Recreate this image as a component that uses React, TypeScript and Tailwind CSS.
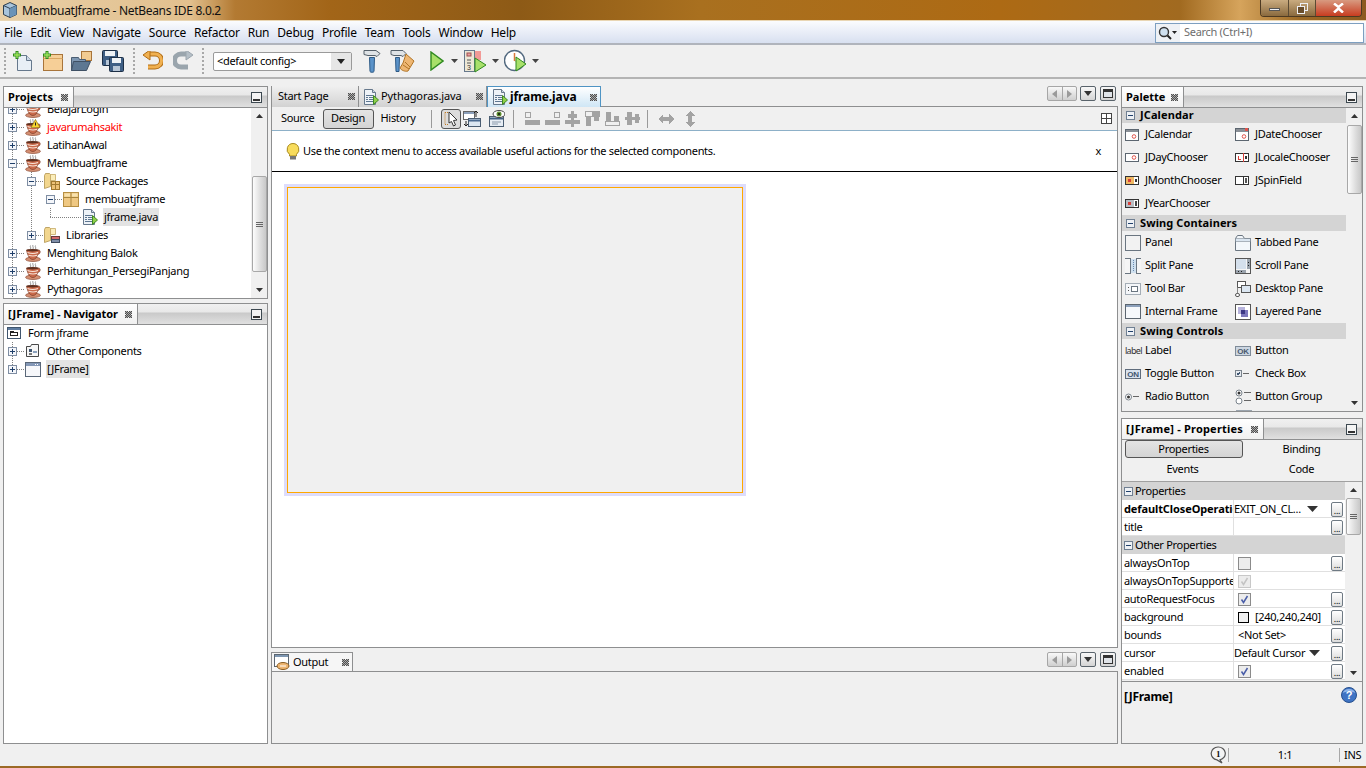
import React from "react";

const FONT = "font-['Noto_Sans',sans-serif]";

/* ---------- small icons ---------- */
const CLOSE_PIXELS: [number, number, string][] = [];
for (let y = 0; y < 7; y++) {
  for (let x = 0; x < 7; x++) {
    const edge = (x === 3 && (y === 0 || y === 6)) || (y === 3 && (x === 0 || x === 6));
    if (edge) continue;
    CLOSE_PIXELS.push([x, y, (x + y) % 2 === 0 ? "#4f4f4f" : "#a8a8a8"]);
  }
}
function Close() {
  return (
    <svg width="7" height="7" viewBox="0 0 7 7" shapeRendering="crispEdges" className="shrink-0">
      {CLOSE_PIXELS.map(([x, y, c]) => (
        <rect key={`${x}-${y}`} x={x} y={y} width="1" height="1" fill={c} />
      ))}
    </svg>
  );
}
function Minimize() {
  return (
    <svg width="11" height="11" viewBox="0 0 11 11" shapeRendering="crispEdges" className="shrink-0">
      <rect x="0.500" y="0.500" width="10" height="10" fill="#f4f4f4" stroke="#3c4850" />
      <rect x="2" y="7" width="7" height="2" fill="#333" />
    </svg>
  );
}
function Cup({ warn }: { warn?: boolean }) {
  return (
    <svg width="16" height="17" viewBox="0 0 16 17" className="shrink-0">
      <path d="M5.500 0.500c-1 1 1 2 0 3.500M8 0c-1 1 1 2.500 0 4M10.500 0.500c-1 1 1 2 0 3.500" stroke="#8c8c8c" fill="none" strokeWidth="0.900" />
      <ellipse cx="8" cy="14.300" rx="7.500" ry="2.200" fill="#d48f72" stroke="#8d4a32" strokeWidth="0.700" />
      <path d="M1.500 5h12c1.200 0 2 1 1.500 2.700-.4 1.200-1.200 1.600-2.200 1.600C12 12 10.500 14.500 8 14.500S3 12.500 1.500 5z" fill="#c9694a" stroke="#7c3c26" strokeWidth="0.700" />
      <path d="M2.500 7.500c3 1.200 7.500 1.200 10.500 0M3.500 10.200c3 1 6 1 8.500 0" stroke="#f8e4d8" strokeWidth="1.100" fill="none" />
      <ellipse cx="7.500" cy="5.200" rx="6" ry="1.300" fill="#5e3020" />
      {warn && <path d="M10.500 0.500l4.500 8h-9z" fill="#f7d530" stroke="#8a6d10" strokeWidth="0.600" />}
      {warn && <rect x="10" y="3.500" width="1" height="3" fill="#222" />}
    </svg>
  );
}
function JavaFile() {
  return (
    <svg width="16" height="16" viewBox="0 0 16 16" className="shrink-0">
      <path d="M1.500 0.500h8l3 3v12h-11z" fill="#eef3f8" stroke="#66788c" />
      <path d="M9.500 0.500v3h3" fill="#cdd9e6" stroke="#66788c" />
      <path d="M3 6.500h7M3 8.500h2M6 8.500h4M3 10.500h2M6 10.500h4M3 12.500h7" stroke="#5d7691" />
      <path d="M10.500 6.500l5 4.500-5 4.500z" fill="#8fd04a" stroke="#3f8a22" />
    </svg>
  );
}
function Folder({ badge }: { badge: "pkg" | "lib" }) {
  return (
    <svg width="16" height="17" viewBox="0 0 16 17" className="shrink-0">
      <path d="M0.500 2.500l1-2h4l1 1v12l-6 2z" fill="#f2d68e" stroke="#b0934f" strokeWidth="0.800" />
      <path d="M6.500 1.500h5v6h-5z" fill="#fbeebb" stroke="#c5a864" strokeWidth="0.800" />
      {badge === "pkg" ? (
        <>
          <rect x="7.500" y="8.500" width="8" height="8" fill="#eec377" stroke="#a27a30" />
          <path d="M7.500 11.500h8M11.500 8.500v8" stroke="#a27a30" />
        </>
      ) : (
        <>
          <rect x="7.500" y="9.500" width="8" height="3" fill="#d16a6a" stroke="#6a3b3b" />
          <rect x="7.500" y="12.500" width="8" height="3" fill="#7f8ea8" stroke="#3f4a5e" />
        </>
      )}
    </svg>
  );
}
function PackageIcon() {
  return (
    <svg width="16" height="15" viewBox="0 0 16 15" className="shrink-0">
      <rect x="0.500" y="0.500" width="15" height="14" fill="#efc882" stroke="#b78f42" />
      <path d="M0.500 5.500h15M8 0.500v14" stroke="#a9853c" />
      <path d="M1.500 1.500h5.500v3h-5.500zM9 1.500h5.500v3h-5.500z" fill="#f8e2ae" />
    </svg>
  );
}
function FrameIcon() {
  return (
    <svg width="16" height="15" viewBox="0 0 16 15" className="shrink-0">
      <rect x="0.500" y="0.500" width="15" height="14" fill="#f6f7fa" stroke="#5a6778" />
      <rect x="1" y="1" width="14" height="3" fill="#8397b6" />
      <path d="M10 2.500h1M12 2.500h1" stroke="#fff" />
    </svg>
  );
}
function FormIcon() {
  return (
    <svg width="14" height="12" viewBox="0 0 14 12" className="shrink-0" shapeRendering="crispEdges">
      <rect x="0.500" y="0.500" width="13" height="11" fill="#fff" stroke="#40566e" />
      <rect x="1" y="1" width="12" height="2" fill="#5f7da0" />
      <rect x="3.500" y="5.500" width="7" height="3" fill="#fff" stroke="#222" />
      <rect x="3" y="4" width="4" height="1" fill="#222" />
    </svg>
  );
}
function OtherIcon() {
  return (
    <svg width="16" height="14" viewBox="0 0 16 14" className="shrink-0">
      <path d="M1.500 2.500h4l1-2h7v12h-12z" fill="#f6f6f6" stroke="#333" strokeWidth="0.900" />
      <rect x="4" y="5" width="3" height="3" fill="#3f5570" />
      <rect x="8" y="7" width="4" height="2" fill="#8aa0bc" />
      <rect x="4" y="9" width="3" height="2" fill="#777" />
    </svg>
  );
}

/* ---------- tree ---------- */
function Gutter({ w, exp, at, lines = [], elbow, lastHalf }: { w: number; exp?: "+" | "-"; at: number; lines?: number[]; elbow?: number; lastHalf?: number }) {
  return (
    <svg width={w} height="18" className="shrink-0" shapeRendering="crispEdges">
      {lines.map((x) => (
        <line key={x} x1={x + 0.5} x2={x + 0.5} y1="0" y2="18" stroke="#808080" strokeDasharray="1 1" />
      ))}
      {lastHalf !== undefined && <line x1={lastHalf + 0.5} x2={lastHalf + 0.5} y1="0" y2="9" stroke="#808080" strokeDasharray="1 1" />}
      {elbow !== undefined && <line x1={elbow + 0.5} x2={elbow + 0.5} y1="0" y2="9" stroke="#808080" strokeDasharray="1 1" />}
      {elbow !== undefined && <line x1={elbow} x2={w} y1="9.500" y2="9.500" stroke="#808080" strokeDasharray="1 1" />}
      {exp && <line x1={at + 5} x2={w} y1="9.500" y2="9.500" stroke="#808080" strokeDasharray="1 1" />}
      {exp && <rect x={at - 4 + 0.5} y="5.500" width="8" height="8" fill="#f4f6fa" stroke="#7f8ea3" />}
      {exp && <line x1={at - 2} x2={at + 3} y1="9.500" y2="9.500" stroke="#20406b" />}
      {exp === "+" && <line x1={at + 0.5} x2={at + 0.5} y1="7" y2="12" stroke="#20406b" />}
    </svg>
  );
}
function TreeText({ children, sel, red }: { children: React.ReactNode; sel?: boolean; red?: boolean }) {
  return <span className={`ml-[5px] px-[1px] leading-[18px] whitespace-nowrap ${sel ? "bg-[#e3e3e3]" : ""} ${red ? "text-[#ff0000]" : "text-black"}`}>{children}</span>;
}

/* ---------- scrollbar ---------- */
function Scrollbar({ thumb, className }: { thumb: string; className: string }) {
  return (
    <div className={`flex flex-col bg-[#f0f0f0] shrink-0 relative ${className}`}>
      <div className="h-[16px] flex items-center justify-center shrink-0">
        <svg width="7" height="4" viewBox="0 0 7 4"><path d="M3.500 0L7 4H0z" fill="#333" /></svg>
      </div>
      <div className="flex-1 min-h-0">
        <div className={`mx-auto w-[15px] rounded-[2px] border border-[#a8a8a8] bg-[linear-gradient(to_right,#fdfdfd,#dcdcdc_60%,#c8c8c8)] flex flex-col items-center justify-center gap-[1px] ${thumb}`}>
          <div className="w-[7px] h-[1px] bg-[#666]" />
          <div className="w-[7px] h-[1px] bg-[#666]" />
          <div className="w-[7px] h-[1px] bg-[#666]" />
        </div>
      </div>
      <div className="h-[16px] flex items-center justify-center shrink-0">
        <svg width="7" height="4" viewBox="0 0 7 4"><path d="M0 0h7L3.500 4z" fill="#333" /></svg>
      </div>
    </div>
  );
}

/* ---------- view panel header ---------- */
function ViewHeader({ title, w, track }: { title: string; w: string; track: string }) {
  return (
    <div className="flex h-[21px] shrink-0 border-b border-[#8e8f90] bg-[linear-gradient(to_bottom,#f0f0f0,#e8e8e8_40%,#c9c9c9_45%,#e0e0e0)]">
      <div className={`flex items-center border-r border-[#8e8f90] bg-[linear-gradient(to_bottom,#ffffff,#f0f0f0)] pl-[4px] ${w}`}>
        <span className={`font-bold text-[11px] whitespace-nowrap ${track}`}>{title}</span>
        <span className="ml-auto mr-[5px]"><Close /></span>
      </div>
      <div className="ml-auto mr-[5px] self-center"><Minimize /></div>
    </div>
  );
}

/* ---------- right side window controls ---------- */
function NavButtons() {
  return (
    <div className="flex items-center ml-auto mr-[2px] h-[15px]">
      <div className="flex w-[30px] h-[15px] rounded-[2px] border border-[#a6a6a6] bg-[linear-gradient(to_bottom,#f8f8f8,#cfcfcf)]">
        <div className="flex-1 flex items-center justify-center border-r border-[#a6a6a6]"><svg width="5" height="8"><path d="M5 0v8L0 4z" fill="#9a9a9a" /></svg></div>
        <div className="flex-1 flex items-center justify-center"><svg width="5" height="8"><path d="M0 0v8l5-4z" fill="#9a9a9a" /></svg></div>
      </div>
      <div className="ml-[3px] w-[16px] h-[15px] rounded-[2px] border border-[#59636b] bg-[linear-gradient(to_bottom,#f8f8f8,#d4d4d4)] flex items-center justify-center">
        <svg width="8" height="5"><path d="M0 0h8L4 5z" fill="#333" /></svg>
      </div>
      <div className="ml-[4px] w-[16px] h-[15px] rounded-[2px] border border-[#59636b] bg-[linear-gradient(to_bottom,#f8f8f8,#d4d4d4)] flex items-center justify-center">
        <svg width="10" height="9" shapeRendering="crispEdges"><rect x="0.500" y="0.500" width="9" height="8" fill="#dfe3e8" stroke="#333" /><rect x="1" y="1" width="8" height="2" fill="#333" /></svg>
      </div>
    </div>
  );
}

/* ---------- palette ---------- */
function Glyph({ k }: { k: string }) {
  const s = "#5c6670";
  const f = "#eef1f5";
  switch (k) {
    case "cal":
      return <svg width="14" height="12" viewBox="0 0 14 12"><rect x="0.500" y="0.500" width="13" height="11" fill="#fff" stroke={s} /><rect x="1" y="1" width="12" height="2" fill="#8a8f96" /><circle cx="9" cy="7.500" r="1.800" fill="none" stroke="#e0554d" /></svg>;
    case "date":
      return <svg width="14" height="13" viewBox="0 0 14 13"><rect x="0.500" y="0.500" width="13" height="12" fill="#fff" stroke={s} /><rect x="1" y="1" width="12" height="3" fill="#8a8f96" /><rect x="10" y="0" width="3" height="3" fill="#e0554d" /><circle cx="9" cy="8.500" r="1.800" fill="none" stroke="#e0554d" /></svg>;
    case "day":
      return <svg width="14" height="9" viewBox="0 0 14 9"><rect x="0.500" y="0.500" width="13" height="8" fill="#fff" stroke={s} /><circle cx="9" cy="4.500" r="1.800" fill="none" stroke="#e0554d" /></svg>;
    case "locale":
      return <svg width="14" height="9" viewBox="0 0 14 9" shapeRendering="crispEdges"><rect x="0.500" y="0.500" width="13" height="8" fill="#fff" stroke="#333" /><path d="M3 2.500v4h3M8.500 0v9" stroke="#d8403a" fill="none" /><rect x="10" y="3" width="2" height="3" fill="#333" /></svg>;
    case "month":
      return <svg width="14" height="9" viewBox="0 0 14 9" shapeRendering="crispEdges"><rect x="0.500" y="0.500" width="13" height="8" fill="#f0b964" stroke="#333" /><circle cx="4.500" cy="4.500" r="1.800" fill="#d8403a" /><rect x="9" y="1" width="4" height="7" fill="#fff" /><rect x="10" y="3" width="2" height="3" fill="#333" /></svg>;
    case "spin":
      return <svg width="14" height="9" viewBox="0 0 14 9" shapeRendering="crispEdges"><rect x="0.500" y="0.500" width="13" height="8" fill="#fff" stroke="#333" /><path d="M8.500 0v9" stroke="#333" /><rect x="10" y="2" width="2" height="5" fill="#555" /></svg>;
    case "year":
      return <svg width="14" height="9" viewBox="0 0 14 9" shapeRendering="crispEdges"><rect x="0.500" y="0.500" width="13" height="8" fill="#b9bec4" stroke="#333" /><circle cx="4.500" cy="4.500" r="1.800" fill="#d8403a" /><rect x="9" y="1" width="4" height="7" fill="#fff" /><rect x="10" y="2" width="2" height="5" fill="#444" /></svg>;
    case "panel":
      return <svg width="16" height="16" viewBox="0 0 16 16"><rect x="0.500" y="0.500" width="15" height="15" fill="#f2f2f2" stroke="#6a7580" /></svg>;
    case "tabbed":
      return <svg width="16" height="16" viewBox="0 0 16 16"><path d="M0.500 15.500v-12l2-3h5l2 3h6v12z" fill="#f3f7fb" stroke="#6a7580" /><path d="M0.500 3.500h15v3h-15z" fill="#dbe6f1" stroke="#6a7580" strokeWidth="0.500" /></svg>;
    case "split":
      return <svg width="16" height="16" viewBox="0 0 16 16" shapeRendering="crispEdges"><path d="M0 0.500h5v15H0M16 0.500h-5v15h5" fill="#f5f5f5" stroke="#6a7580" /><rect x="5.500" y="1" width="5" height="14" fill="#cfe0ef" /><path d="M8 2v12" stroke="#6a8cb0" strokeDasharray="1 1" /></svg>;
    case "scroll":
      return <svg width="16" height="16" viewBox="0 0 16 16" shapeRendering="crispEdges"><rect x="0.500" y="0.500" width="15" height="15" fill="#f5f5f5" stroke="#555" /><rect x="1" y="1" width="10" height="10" fill="#d5e0ec" /><path d="M12 1h3v10h-3zM1 12h10v3H1z" fill="#9aa3ad" /><path d="M13 4h1v1h-1zM13 7h1v1h-1zM3 13h1v1H3zM6 13h1v1H6z" fill="#222" /></svg>;
    case "toolbar":
      return <svg width="16" height="12" viewBox="0 0 16 12" shapeRendering="crispEdges"><rect x="0.500" y="0.500" width="15" height="11" fill="#f4f6f9" stroke="#a4adb6" /><path d="M3 4h1v1H3zM3 7h1v1H3z" fill="#555" /><rect x="6.500" y="3.500" width="6" height="5" fill="#fff" stroke="#6a7580" /></svg>;
    case "desktop":
      return <svg width="16" height="16" viewBox="0 0 16 16"><rect x="2.500" y="0.500" width="8" height="6" fill="#fff" stroke="#555" /><rect x="6.500" y="4.500" width="9" height="7" fill="#dce7f2" stroke="#555" /><rect x="0.500" y="12.500" width="4" height="3" rx="1.500" fill="#fff" stroke="#555" /><path d="M2.500 6.500v6" stroke="#888" /></svg>;
    case "iframe":
      return <svg width="16" height="15" viewBox="0 0 16 15"><rect x="0.500" y="0.500" width="15" height="14" fill="#f6f8fb" stroke="#5c6670" /><rect x="1" y="1" width="14" height="2" fill="#8ca0bb" /></svg>;
    case "layered":
      return <svg width="16" height="16" viewBox="0 0 16 16" shapeRendering="crispEdges"><rect x="0.500" y="0.500" width="15" height="15" fill="#fff" stroke="#555" /><rect x="3" y="3" width="7" height="7" fill="#b7b3dc" /><rect x="6" y="6" width="7" height="7" fill="#7d78bc" /><rect x="6" y="6" width="4" height="4" fill="#3d3985" /></svg>;
    case "label":
      return <span className="text-[9px] leading-none tracking-[-0.7px] text-[#333]">label</span>;
    case "ok":
      return <svg width="16" height="10" viewBox="0 0 16 10" shapeRendering="crispEdges"><rect x="0.500" y="0.500" width="15" height="9" fill="#ccd6e2" stroke="#7f8b98" /><text x="8" y="8" textAnchor="middle" fontSize="8" fontWeight="700" fontFamily="Liberation Sans" fill="#4a5a6e">OK</text></svg>;
    case "on":
      return <svg width="16" height="10" viewBox="0 0 16 10" shapeRendering="crispEdges"><rect x="0.500" y="0.500" width="15" height="9" fill="#d8e2ee" stroke="#5f6c7c" /><text x="8" y="8" textAnchor="middle" fontSize="8" fontWeight="700" fontFamily="Liberation Sans" fill="#3f5570">ON</text></svg>;
    case "check":
      return <svg width="14" height="8" viewBox="0 0 14 8" shapeRendering="crispEdges"><rect x="0.500" y="0.500" width="6" height="6" fill="#e6eaef" stroke="#7a838c" /><path d="M2 3l1 2 2-3" stroke="#3f5570" fill="none" /><path d="M8 3.500h6" stroke="#666" /></svg>;
    case "radio":
      return <svg width="14" height="8" viewBox="0 0 14 8"><circle cx="3.500" cy="4" r="3" fill="#fff" stroke="#7a838c" /><circle cx="3.500" cy="4" r="1.500" fill="#333" /><path d="M8 3.500h6" stroke="#666" /></svg>;
    case "group":
      return <svg width="16" height="16" viewBox="0 0 16 16"><circle cx="4" cy="4" r="3" fill="#fff" stroke="#7a838c" /><circle cx="4" cy="12" r="3" fill="#fff" stroke="#7a838c" /><circle cx="4" cy="4" r="1.500" fill="#333" /><path d="M9 3.500h7M9 11.500h7" stroke="#666" /></svg>;
    default:
      return <svg width="14" height="12"><rect x="0.500" y="0.500" width="13" height="11" fill={f} stroke={s} /></svg>;
  }
}
function PaletteItem({ k, text }: { k: string; text: string }) {
  return (
    <div className="flex items-center h-[23px] ml-[2px]">
      <div className="w-[20px] flex items-center pl-[1px] shrink-0"><Glyph k={k} /></div>
      <span className="ml-[1px] whitespace-nowrap">{text}</span>
    </div>
  );
}
function Category({ text, h }: { text: string; h: string }) {
  return (
    <div className={`flex items-center bg-[#d4d4d4] pl-[4px] ${h}`}>
      <svg width="9" height="9" className="shrink-0" shapeRendering="crispEdges"><rect x="0.500" y="0.500" width="8" height="8" fill="#eef1f5" stroke="#6f7f92" /><path d="M2 4.500h5" stroke="#20406b" /></svg>
      <span className="ml-[5px] font-bold text-[11px] tracking-[0.1px]">{text}</span>
    </div>
  );
}
function PaletteGrid({ items }: { items: [string, string, string?, string?][] }) {
  return (
    <div className="grid grid-cols-[110px_114px]">
      {items.map((r) => (
        <React.Fragment key={r[1]}>
          <PaletteItem k={r[0]} text={r[1]} />
          {r[2] ? <PaletteItem k={r[2]} text={r[3] as string} /> : <div />}
        </React.Fragment>
      ))}
    </div>
  );
}

/* ---------- properties ---------- */
function Dots() {
  return (
    <div className="w-[12px] h-[15px] rounded-[2px] border border-[#6f7a84] bg-[linear-gradient(to_bottom,#ffffff,#dcdcdc)] flex items-end justify-center text-[9px] leading-[10px] ml-auto mr-[2px] shrink-0">...</div>
  );
}
function Check({ on, dim }: { on?: boolean; dim?: boolean }) {
  return (
    <svg width="13" height="13" viewBox="0 0 13 13" className="ml-[4px] shrink-0">
      <rect x="0.500" y="0.500" width="12" height="12" fill="#ececec" stroke={dim ? "#c8c8c8" : "#8b8b8b"} />
      {on && <path d="M3.500 6.500l2 3 4-6.500" fill="none" stroke={dim ? "#c4c4c4" : "#4a5ea8"} strokeWidth="1.500" />}
    </svg>
  );
}
function PropRow({ name, bold, children, dots = true }: { name: string; bold?: boolean; children?: React.ReactNode; dots?: boolean }) {
  return (
    <div className="flex h-[18px] bg-white border-b border-[#e0e0e0] items-center">
      <div className={`w-[112px] pl-[2px] h-full border-r border-[#e0e0e0] overflow-hidden whitespace-nowrap leading-[18px] ${bold ? "font-bold tracking-[-0.1px]" : ""}`}>{name}</div>
      <div className="flex-1 flex items-center min-w-0 h-full pt-[1px]">
        {children}
        {dots && <Dots />}
      </div>
    </div>
  );
}
function PropCat({ text }: { text: string }) {
  return (
    <div className="flex h-[18px] items-center bg-[#d4d4d4] pl-[2px]">
      <svg width="9" height="9" className="shrink-0" shapeRendering="crispEdges"><rect x="0.500" y="0.500" width="8" height="8" fill="#eef1f5" stroke="#6f7f92" /><path d="M2 4.500h5" stroke="#20406b" /></svg>
      <span className="ml-[2px]">{text}</span>
    </div>
  );
}
function Caret() {
  return <svg width="11" height="6" className="ml-auto mr-[7px] shrink-0"><path d="M0 0h11L5.500 6z" fill="#333" /></svg>;
}

/* ---------- toolbar icons ---------- */
function ToolGrip() {
  return <div className="w-[3px] h-[26px] shrink-0 border-l-2 border-dotted border-[#a8a8a8]" />;
}
function SmallArrow({ className }: { className: string }) {
  return <svg width="7" height="4" className={`shrink-0 ${className}`}><path d="M0 0h7L3.500 4z" fill="#444" /></svg>;
}
function Tb({ children, w }: { children: React.ReactNode; w: string }) {
  return <div className={`flex items-center justify-center shrink-0 ${w}`}>{children}</div>;
}

function AlignIcon({ d }: { d: string }) {
  return <svg width="16" height="16" viewBox="0 0 16 16" className="shrink-0" shapeRendering="crispEdges"><path d={d} fill="#a3a3a3" fillRule="evenodd" /></svg>;
}

function EditorTab({ children, icon, w, active }: { children: React.ReactNode; icon?: boolean; w: string; active?: boolean }) {
  return (
    <div className={`flex items-center h-[21px] shrink-0 ${w} ${active ? "border border-b-0 border-[#4f94c4] bg-[linear-gradient(to_bottom,#ffffff,#cfe6f5)] relative z-10" : "border-r border-[#8e8f90] bg-[linear-gradient(to_bottom,#f0f0f0,#d2d2d2)]"}`}>
      {icon && <span className="ml-[4px]"><JavaFile /></span>}
      <span className={`whitespace-nowrap ${icon ? "ml-[2px]" : "ml-[6px]"} ${active ? "font-bold text-[12px] tracking-[-0.1px]" : icon ? "tracking-[-0.1px]" : ""}`}>{children}</span>
      <span className="ml-auto mr-[3px]"><Close /></span>
    </div>
  );
}

export default function App() {
  return (
    <div className={`w-[1366px] h-[768px] overflow-hidden flex flex-col bg-[#f0f0f0] text-black text-[11px] tracking-[-0.3px] ${FONT}`}>
      {/* title bar */}
      <div className="h-[21px] shrink-0 flex items-start border-b border-[#e9d6b4] bg-[linear-gradient(to_right,#e8cfa6_0px,#e2c08e_190px,#b37a32_235px,#a26518_330px,#8d5a16_520px,#a9701f_700px,#ad6a14_1000px,#a16a20_1180px,#d6a45c_1240px,#9c6a26_1300px,#8d5a20_1366px)]">
        <svg width="16" height="16" viewBox="0 0 16 16" className="ml-[2px] mt-[2px] shrink-0">
          <path d="M8 0.500l6.500 3v9l-6.500 3-6.500-3v-9z" fill="#a8c4dc" stroke="#2c3e50" />
          <path d="M1.500 3.500l6.500 3 6.500-3M8 6.500v9" fill="none" stroke="#2c3e50" />
          <path d="M8 6.500l6.500-3v9l-6.500 3z" fill="#6a93b8" />
        </svg>
        <span className="ml-[4px] mt-[3px] text-[12px] leading-[15px] text-[#111] whitespace-nowrap">MembuatJframe - NetBeans IDE 8.0.2</span>
        <div className="ml-auto mr-[4px] flex h-[17px] rounded-b-[4px] border border-t-0 border-[#4d3a22] overflow-hidden">
          <div className="w-[28px] flex items-center justify-center border-r border-[#5b4a33] bg-[linear-gradient(to_bottom,#c9ab80,#8a6a3e)]"><div className="w-[11px] h-[3px] mt-[3px] bg-[#eef0f4] border border-[#555]" /></div>
          <div className="w-[27px] flex items-center justify-center border-r border-[#5b4a33] bg-[linear-gradient(to_bottom,#c9ab80,#8a6a3e)]">
            <svg width="11" height="11" viewBox="0 0 11 11"><rect x="3.500" y="0.500" width="7" height="7" fill="none" stroke="#eef0f4" /><rect x="0.500" y="3.500" width="7" height="7" fill="#6a4e2c" stroke="#eef0f4" /></svg>
          </div>
          <div className="w-[45px] flex items-center justify-center bg-[linear-gradient(to_bottom,#d89a80,#c83c20)]">
            <svg width="11" height="10" viewBox="0 0 11 10"><path d="M1 0.500l4.500 3.500 4.500-3.500M1 9.500l4.500-4 4.500 4" fill="none" stroke="#fff" strokeWidth="2.500" /></svg>
          </div>
        </div>
      </div>

      {/* menu bar */}
      <div className="h-[24px] shrink-0 flex items-center pt-[1px] border-b-2 border-[#b0b4bc] bg-[linear-gradient(to_bottom,#fbfcfe,#f0f3fa_30%,#d8e0f0)]">
        <div className="flex items-center gap-[8px] pl-[4px] text-[12px] tracking-[-0.22px]">
          {["File", "Edit", "View", "Navigate", "Source", "Refactor", "Run", "Debug", "Profile", "Team", "Tools", "Window", "Help"].map((m) => (
            <span key={m}>{m}</span>
          ))}
        </div>
        <div className="ml-auto mr-[2px] flex h-[20px] w-[209px] items-center border border-[#7d9fc0] bg-white">
          <div className="w-[24px] h-full bg-[#eef1f5] flex items-center justify-center shrink-0">
            <svg width="20" height="14" viewBox="0 0 20 14"><circle cx="6" cy="6" r="4.500" fill="#cfe0ef" stroke="#333" strokeWidth="1.400" /><path d="M9.500 9.500l3.500 3.500" stroke="#222" strokeWidth="2" /><path d="M14 5h5l-2.500 3z" fill="#222" /></svg>
          </div>
          <span className="ml-[4px] text-[#6d6d6d]">Search (Ctrl+I)</span>
        </div>
      </div>

      {/* tool bar */}
      <div className="h-[34px] shrink-0 flex items-center border-b-2 border-[#b4b4b4] pl-[4px]">
        <ToolGrip />
        <Tb w="w-[21px] ml-[5px]">
          <svg width="20" height="22" viewBox="0 0 20 22"><path d="M4.500 5.500h9l5 5v10h-14z" fill="#e8eff6" stroke="#66788c" /><path d="M13.500 5.500v5h5" fill="#cbd8e6" stroke="#66788c" /><path d="M4 1v8M0 5h8" stroke="#2e8a1e" strokeWidth="3" /><path d="M4 2v6M1 5h6" stroke="#9be25a" strokeWidth="1.400" /></svg>
        </Tb>
        <Tb w="w-[22px] ml-[8px]">
          <svg width="21" height="22" viewBox="0 0 21 22"><rect x="1.500" y="4.500" width="19" height="16" fill="#f6cf97" stroke="#a8743a" /><path d="M1.500 8.500h19" stroke="#d9a763" /><path d="M5 1v8M1 5h8" stroke="#2e8a1e" strokeWidth="3" /><path d="M5 2v6M2 5h6" stroke="#9be25a" strokeWidth="1.400" /></svg>
        </Tb>
        <Tb w="w-[22px] ml-[8px]">
          <svg width="22" height="22" viewBox="0 0 22 22"><rect x="10.500" y="1.500" width="10" height="9" fill="#f2cb92" stroke="#a8743a" /><path d="M0.500 7.500h7l1 2h6v11h-14z" fill="#7e97b2" stroke="#4a5d72" /><path d="M0.500 20.500l2-9h17l-4 9z" fill="#5d7792" stroke="#3f5064" /></svg>
        </Tb>
        <Tb w="w-[22px] ml-[9px]">
          <svg width="22" height="22" viewBox="0 0 22 22"><rect x="0.500" y="0.500" width="15" height="15" rx="1" fill="#3f5f85" stroke="#1d2f46" /><rect x="3" y="1" width="10" height="5" fill="#eef2f6" /><rect x="4" y="10" width="7" height="5" fill="#b8c6d6" /><rect x="7.500" y="7.500" width="14" height="14" rx="1" fill="#3f5f85" stroke="#1d2f46" /><rect x="10" y="8" width="9" height="5" fill="#eef2f6" /><rect x="11" y="16" width="7" height="5" fill="#b8c6d6" /></svg>
        </Tb>
        <div className="ml-[9px]"><ToolGrip /></div>
        <Tb w="w-[21px] ml-[6px]">
          <svg width="21" height="21" viewBox="0 0 21 21"><path d="M7 3h6a6.500 6.500 0 0 1 0 13H6" fill="none" stroke="#b06c14" strokeWidth="5" /><path d="M7 3h6a6.500 6.500 0 0 1 0 13H6" fill="none" stroke="#f0b050" strokeWidth="3" /><path d="M8 -1v10L1 4z" fill="#f0b050" stroke="#b06c14" /></svg>
        </Tb>
        <Tb w="w-[21px] ml-[10px]">
          <svg width="21" height="21" viewBox="0 0 21 21"><path d="M14 3H8a6.500 6.500 0 0 0 0 13h7" fill="none" stroke="#9aa5ad" strokeWidth="5" /><path d="M13 -1v10l7-5z" fill="#b4bec6" stroke="#9aa5ad" /></svg>
        </Tb>
        <div className="ml-[8px]"><ToolGrip /></div>
        <div className="ml-[8px] flex w-[139px] h-[19px] items-center justify-between rounded-[2px] border border-[#9a9a9a] bg-white pl-[3px]">
          <span className="whitespace-nowrap">&lt;default config&gt;</span>
          <div className="w-[20px] h-full flex items-center justify-center bg-[#e6e6e6]"><svg width="8" height="5"><path d="M0 0h8L4 5z" fill="#222" /></svg></div>
        </div>
        <Tb w="w-[18px] ml-[11px]">
          <svg width="18" height="24" viewBox="0 0 18 24"><path d="M6.500 8.500h5l-0.500 14c0 1-4 1-4 0z" fill="#5b93c9" stroke="#2d5a86" /><path d="M1 1.500h12l4 3-3 3-2-1H5l-4-1z" fill="#dfe3e6" stroke="#55606a" /></svg>
        </Tb>
        <Tb w="w-[26px] ml-[9px]">
          <svg width="26" height="24" viewBox="0 0 26 24"><path d="M5.500 8.500h4l-0.500 14h-3z" fill="#5b93c9" stroke="#2d5a86" /><path d="M1 1.500h12l3 3-3 3-2-1H4l-3-1z" fill="#dfe3e6" stroke="#55606a" /><path d="M16 5l8 7-6 10c-3 1-7-1-8-3l3-5z" fill="#eeb672" stroke="#b07426" /><path d="M13 16l6 4M15 13l5 5" stroke="#b07426" /></svg>
        </Tb>
        <Tb w="w-[14px] ml-[14px]">
          <svg width="14" height="20" viewBox="0 0 14 20"><path d="M1 1l12 9-12 9z" fill="#a8e06a" stroke="#2f8a20" strokeWidth="1.400" /></svg>
        </Tb>
        <SmallArrow className="ml-[7px]" />
        <Tb w="w-[23px] ml-[6px]">
          <svg width="23" height="24" viewBox="0 0 23 24"><rect x="0.500" y="1.500" width="10" height="21" fill="#ece7d6" stroke="#66788c" /><rect x="11" y="2" width="6" height="9" fill="#f29a96" /><rect x="3" y="4" width="4" height="3" fill="#e8a0a0" stroke="#a05050" /><path d="M3 11h4M3 14h4" stroke="#555" /><text x="3" y="21" fontSize="7" fontFamily="Liberation Sans" fill="#333">3</text><path d="M11 9l11 7-11 7z" fill="#a8e06a" stroke="#2f8a20" /></svg>
        </Tb>
        <SmallArrow className="ml-[5px]" />
        <Tb w="w-[23px] ml-[5px]">
          <svg width="23" height="24" viewBox="0 0 23 24"><circle cx="10.500" cy="11.500" r="10" fill="#fff" stroke="#52697f" strokeWidth="1.400" /><path d="M10.500 4v8" stroke="#d8793a" strokeWidth="1.500" /><path d="M10.500 12l5-3v6z" fill="#f2b488" /><path d="M12 8l10 7-10 7z" fill="#a8e06a" stroke="#2f8a20" /></svg>
        </Tb>
        <SmallArrow className="ml-[5px]" />
      </div>

      {/* main */}
      <div className="flex-1 min-h-0 flex gap-[3px] pl-[3px] pt-[7px]">
        {/* left */}
        <div className="w-[265px] shrink-0 flex flex-col gap-[4px]">
          <div className="h-[213px] shrink-0 flex flex-col border border-[#8e8f90] bg-white">
            <ViewHeader title="Projects" w="w-[70px]" track="tracking-[0.1px]" />
            <div className="flex-1 min-h-0 flex overflow-hidden">
              <div className="flex-1 min-w-0 overflow-hidden">
                <div className="-mt-[8px]">
                  {[
                    ["BelajarLogin", false, false],
                    ["javarumahsakit", true, true],
                    ["LatihanAwal", false, false],
                  ].map(([t, r, w]) => (
                    <div key={t as string} className="flex items-center h-[18px]">
                      <Gutter w={21} exp="+" at={8} lines={[8]} />
                      <Cup warn={w as boolean} />
                      <TreeText red={r as boolean}>{t as string}</TreeText>
                    </div>
                  ))}
                  <div className="flex items-center h-[18px]"><Gutter w={21} exp="-" at={8} lines={[8]} /><Cup /><TreeText>MembuatJframe</TreeText></div>
                  <div className="flex items-center h-[18px]"><Gutter w={40} exp="-" at={27} lines={[8, 27]} /><Folder badge="pkg" /><TreeText>Source Packages</TreeText></div>
                  <div className="flex items-center h-[18px]"><Gutter w={59} exp="-" at={46} lines={[8, 27]} /><PackageIcon /><TreeText>membuatjframe</TreeText></div>
                  <div className="flex items-center h-[18px]"><Gutter w={78} at={46} lines={[8, 27]} elbow={46} /><JavaFile /><TreeText sel>jframe.java</TreeText></div>
                  <div className="flex items-center h-[18px]"><Gutter w={40} exp="+" at={27} lines={[8]} lastHalf={27} /><Folder badge="lib" /><TreeText>Libraries</TreeText></div>
                  {["Menghitung Balok", "Perhitungan_PersegiPanjang", "Pythagoras"].map((t) => (
                    <div key={t} className="flex items-center h-[18px]"><Gutter w={21} exp="+" at={8} lines={[8]} /><Cup /><TreeText>{t}</TreeText></div>
                  ))}
                </div>
              </div>
              <Scrollbar className="w-[16px]" thumb="mt-[52px] h-[96px]" />
            </div>
          </div>
          <div className="flex-1 min-h-0 flex flex-col border border-[#8e8f90] bg-white">
            <ViewHeader title="[JFrame] - Navigator" w="w-[134px]" track="tracking-[-0.05px]" />
            <div className="-mt-[1px]">
              <div className="flex items-center h-[18px] pl-[3px]"><FormIcon /><span className="ml-[7px]">Form jframe</span></div>
              <div className="flex items-center h-[18px]"><Gutter w={21} exp="+" at={8} lines={[8]} /><OtherIcon /><TreeText>Other Components</TreeText></div>
              <div className="flex items-center h-[18px]"><Gutter w={21} exp="+" at={8} lastHalf={8} /><FrameIcon /><TreeText sel>[JFrame]</TreeText></div>
            </div>
          </div>
        </div>

        {/* center */}
        <div className="w-[847px] shrink-0 flex flex-col gap-[4px]">
          <div className="h-[562px] shrink-0 flex flex-col">
            <div className="flex h-[21px] shrink-0 border-b border-[#8e8f90]">
              <div className="flex border-l border-[#8e8f90]">
                <EditorTab w="w-[87px]">Start Page</EditorTab>
                <EditorTab w="w-[128px]" icon>Pythagoras.java</EditorTab>
                <EditorTab w="w-[114px]" icon active>jframe.java</EditorTab>
              </div>
              <NavButtons />
            </div>
            <div className="flex-1 min-h-0 flex flex-col border-x border-b border-[#8e8f90] bg-white">
              <div className="h-[24px] shrink-0 flex items-center border-b border-[#8db0c8] bg-[#f0f0f0]">
                <span className="ml-[9px]">Source</span>
                <div className="ml-[8px] w-[51px] h-[20px] flex items-center justify-center rounded-[3px] border border-[#555] bg-[linear-gradient(to_bottom,#e4e4e4,#d4d4d4)]">Design</div>
                <span className="ml-[7px]">History</span>
                <div className="ml-[16px] w-[1px] h-[18px] bg-[#9a9a9a]" />
                <div className="ml-[9px] w-[20px] h-[20px] rounded-[3px] border border-[#555] bg-[#dcdcdc] flex items-center justify-center">
                  <svg width="16" height="16" viewBox="0 0 16 16"><path d="M2 1.500h4M2 1.500v12M2 13.500h4" stroke="#c07a20" strokeDasharray="1 1" fill="none" /><path d="M6 1l8 8-3.500 0.500 2 4.500-2 1-2-4.500L6 12z" fill="#fff" stroke="#333" /></svg>
                </div>
                <div className="ml-[2px]">
                  <svg width="18" height="18" viewBox="0 0 18 18"><rect x="0.500" y="1.500" width="11" height="8" fill="#fff" stroke="#666" /><path d="M1 3h10" stroke="#8ca0bb" strokeWidth="2" /><rect x="5.500" y="8.500" width="12" height="8" fill="#dbe6f1" stroke="#4a5d72" /><path d="M6 10.500h11" stroke="#4a6a90" strokeWidth="2" /><path d="M13 1v6M11 3l2-2 2 2M3 11v5M1 14l2 2 2-2" stroke="#222" fill="none" /></svg>
                </div>
                <div className="ml-[8px]">
                  <svg width="16" height="18" viewBox="0 0 16 18"><rect x="0.500" y="6.500" width="14" height="10" fill="#e7edf4" stroke="#4a5d72" /><path d="M1 8.500h13" stroke="#3f5f85" strokeWidth="2" /><path d="M3 12h9M3 14h6" stroke="#8a99aa" /><ellipse cx="10" cy="4" rx="6" ry="3.500" fill="#fff" stroke="#444" /><circle cx="10" cy="4" r="2.500" fill="#5a8a2c" /><circle cx="10" cy="4" r="1" fill="#111" /></svg>
                </div>
                <div className="ml-[8px] w-[1px] h-[18px] bg-[#9a9a9a]" />
                <div className="ml-[11px] flex items-center gap-[4px]">
                  <AlignIcon d="M0 1h6v6H0zM1 2v4h4V2zM0 9h15v5H0z" />
                  <AlignIcon d="M9 1h6v6H9zM10 2v4h4V2zM0 9h15v5H0z" />
                  <AlignIcon d="M6 0h3v3H6zM3 3h9v4H3zM6 7h3v2H6zM0 9h15v4H0zM6 13h3v3H6z" />
                  <AlignIcon d="M0 0h15v6H0zM1 1v4h6V1zM1 6h5v9H1zM9 6h5v4H9z" />
                  <AlignIcon d="M1 1h5v9H1zM9 5h5v5H9zM0 10h15v5H0zM1 11v3h13v-3z" />
                  <AlignIcon d="M0 6h2v3H0zM2 1h5v13H2zM7 6h3v3H7zM10 3h4v9h-4zM14 6h1v3h-1z" />
                </div>
                <div className="ml-[6px] w-[1px] h-[18px] bg-[#9a9a9a]" />
                <div className="ml-[10px] flex items-center gap-[8px]">
                  <AlignIcon d="M0 8l5-5v3h6V3l5 5-5 5v-3H5v3z" />
                  <AlignIcon d="M8 0l5 5h-3v6h3l-5 5-5-5h3V5H3z" />
                </div>
                <div className="ml-auto mr-[5px]">
                  <svg width="11" height="11" shapeRendering="crispEdges"><rect x="0.500" y="0.500" width="10" height="10" fill="#fff" stroke="#444" /><path d="M5.500 0v11M0 5.500h11" stroke="#444" /></svg>
                </div>
              </div>
              <div className="h-[41px] shrink-0 flex items-center border-b border-black pl-[14px] pr-[16px]">
                <svg width="14" height="17" viewBox="0 0 14 17" className="shrink-0"><path d="M7 0.500a6 6 0 0 1 3.500 10.800V13h-7v-1.700A6 6 0 0 1 7 0.500z" fill="#f8dc5c" stroke="#a88a20" /><rect x="4" y="13" width="6" height="3.500" fill="#777" /></svg>
                <span className="ml-[3px] tracking-[-0.33px]">Use the context menu to access available useful actions for the selected components.</span>
                <span className="ml-auto">x</span>
              </div>
              <div className="flex-1 min-h-0 pl-[12px] pt-[12px]">
                <div className="w-[462px] h-[312px] bg-[#dddcfb] p-[3px]">
                  <div className="w-full h-full border border-[#ffa800] bg-[#f0f0f0]" />
                </div>
              </div>
            </div>
          </div>
          <div className="flex-1 min-h-0 flex flex-col">
            <div className="flex h-[20px] shrink-0 border-b border-[#8e8f90]">
              <div className="flex w-[82px] items-center border border-b-0 border-[#8e8f90] bg-[#f6f6f6]">
                <svg width="16" height="16" viewBox="0 0 16 16" className="ml-[2px] shrink-0"><rect x="0.500" y="0.500" width="14" height="12" fill="#fff" stroke="#5c6670" /><rect x="1" y="1" width="13" height="2" fill="#7e97b2" /><ellipse cx="9" cy="12" rx="6" ry="3.500" fill="#eeb672" stroke="#8a5c20" /><path d="M6 12h6" stroke="#fff" /></svg>
                <span className="ml-[3px]">Output</span>
                <span className="ml-auto mr-[3px]"><Close /></span>
              </div>
              <NavButtons />
            </div>
            <div className="flex-1 min-h-0 border-x border-b border-[#8e8f90]" />
          </div>
        </div>

        {/* right */}
        <div className="w-[242px] shrink-0 flex flex-col gap-[6px]">
          <div className="h-[326px] shrink-0 flex flex-col border border-[#8e8f90]">
            <ViewHeader title="Palette" w="w-[62px]" track="tracking-[0px]" />
            <div className="flex-1 min-h-0 flex overflow-hidden">
              <div className="w-[224px] shrink-0 overflow-hidden">
                <Category text="JCalendar" h="h-[15px]" />
                <PaletteGrid items={[["cal", "JCalendar", "date", "JDateChooser"], ["day", "JDayChooser", "locale", "JLocaleChooser"], ["month", "JMonthChooser", "spin", "JSpinField"], ["year", "JYearChooser"]]} />
                <Category text="Swing Containers" h="h-[16px]" />
                <PaletteGrid items={[["panel", "Panel", "tabbed", "Tabbed Pane"], ["split", "Split Pane", "scroll", "Scroll Pane"], ["toolbar", "Tool Bar", "desktop", "Desktop Pane"], ["iframe", "Internal Frame", "layered", "Layered Pane"]]} />
                <Category text="Swing Controls" h="h-[16px]" />
                <PaletteGrid items={[["label", "Label", "ok", "Button"], ["on", "Toggle Button", "check", "Check Box"], ["radio", "Radio Button", "group", "Button Group"]]} />
                <div className="ml-[114px] mt-[2px] w-[16px] h-[1px] bg-[#9aa3ad]" />
              </div>
              <Scrollbar className="flex-1" thumb="mt-[1px] h-[69px]" />
            </div>
          </div>
          <div className="flex-1 min-h-0 flex flex-col border border-[#8e8f90]">
            <ViewHeader title="[JFrame] - Properties" w="w-[142px]" track="tracking-[0.2px]" />
            <div className="grid grid-cols-[121px_117px] h-[42px] shrink-0 border-b border-[#a0a0a0] text-center content-start">
              <div className="h-[20px] flex items-center justify-center -mt-[1px]"><div className="ml-[2px] w-[118px] h-[18px] leading-[16px] rounded-[3px] border border-[#555] bg-[linear-gradient(to_bottom,#e4e4e4,#d4d4d4)]">Properties</div></div>
              <div className="h-[20px] leading-[20px] -mt-[1px]">Binding</div>
              <div className="h-[20px] leading-[20px]">Events</div>
              <div className="h-[20px] leading-[20px]">Code</div>
            </div>
            <div className="flex h-[200px] shrink-0 overflow-hidden border-b border-[#8e8f90]">
              <div className="w-[223px] shrink-0">
                <PropCat text="Properties" />
                <PropRow name="defaultCloseOperation" bold><span className="whitespace-nowrap">EXIT_ON_CL...</span><Caret /></PropRow>
                <PropRow name="title" />
                <PropCat text="Other Properties" />
                <PropRow name="alwaysOnTop"><Check /></PropRow>
                <PropRow name="alwaysOnTopSupported" dots={false}><Check on dim /></PropRow>
                <PropRow name="autoRequestFocus"><Check on /></PropRow>
                <PropRow name="background">
                  <span className="ml-[4px] w-[11px] h-[11px] border border-black bg-[#f0f0f0] shrink-0" />
                  <span className="ml-[6px] whitespace-nowrap">[240,240,240]</span>
                </PropRow>
                <PropRow name="bounds"><span className="ml-[4px] whitespace-nowrap">&lt;Not Set&gt;</span></PropRow>
                <PropRow name="cursor"><span className="whitespace-nowrap">Default Cursor</span><Caret /></PropRow>
                <PropRow name="enabled"><Check on /></PropRow>
              </div>
              <Scrollbar className="flex-1" thumb="h-[37px]" />
            </div>
            <div className="flex-1 min-h-0 flex items-start justify-between pl-[2px] pt-[6px] pr-[5px]">
              <span className="font-bold text-[12px] tracking-[-0.3px]">[JFrame]</span>
              <svg width="16" height="16" viewBox="0 0 16 16" className="-mt-[1px]"><circle cx="8" cy="8" r="7.500" fill="#3f74c4" stroke="#27508e" /><path d="M2 6a6 4 0 0 1 12 0c-3-2-9-2-12 0z" fill="#8fb4e8" /><text x="8" y="12" textAnchor="middle" fontSize="11" fontWeight="700" fontFamily="Liberation Sans" fill="#fff">?</text></svg>
            </div>
          </div>
        </div>
      </div>

      {/* status bar */}
      <div className="h-[24px] shrink-0 flex flex-col">
        <div className="flex-1 flex items-center justify-end">
          <svg width="16" height="18" viewBox="0 0 16 18" className="shrink-0">
            <path d="M8 1a7 6.500 0 0 1 2 12.800L12 17l-5-3.100A7 6.500 0 0 1 8 1z" fill="#f4f4f4" stroke="#555" strokeWidth="1.200" />
            <text x="8" y="11" textAnchor="middle" fontSize="9" fontWeight="700" fontFamily="Liberation Serif" fill="#111">1</text>
          </svg>
          <div className="ml-[2px] w-[1px] h-[14px] bg-[#a8a8a8]" />
          <div className="w-[110px] text-center pl-[2px]">1:1</div>
          <div className="w-[1px] h-[14px] bg-[#a8a8a8]" />
          <div className="w-[26px] pl-[4px]">INS</div>
        </div>
        <div className="h-[2px] bg-[#9c6a26]" />
      </div>
    </div>
  );
}
